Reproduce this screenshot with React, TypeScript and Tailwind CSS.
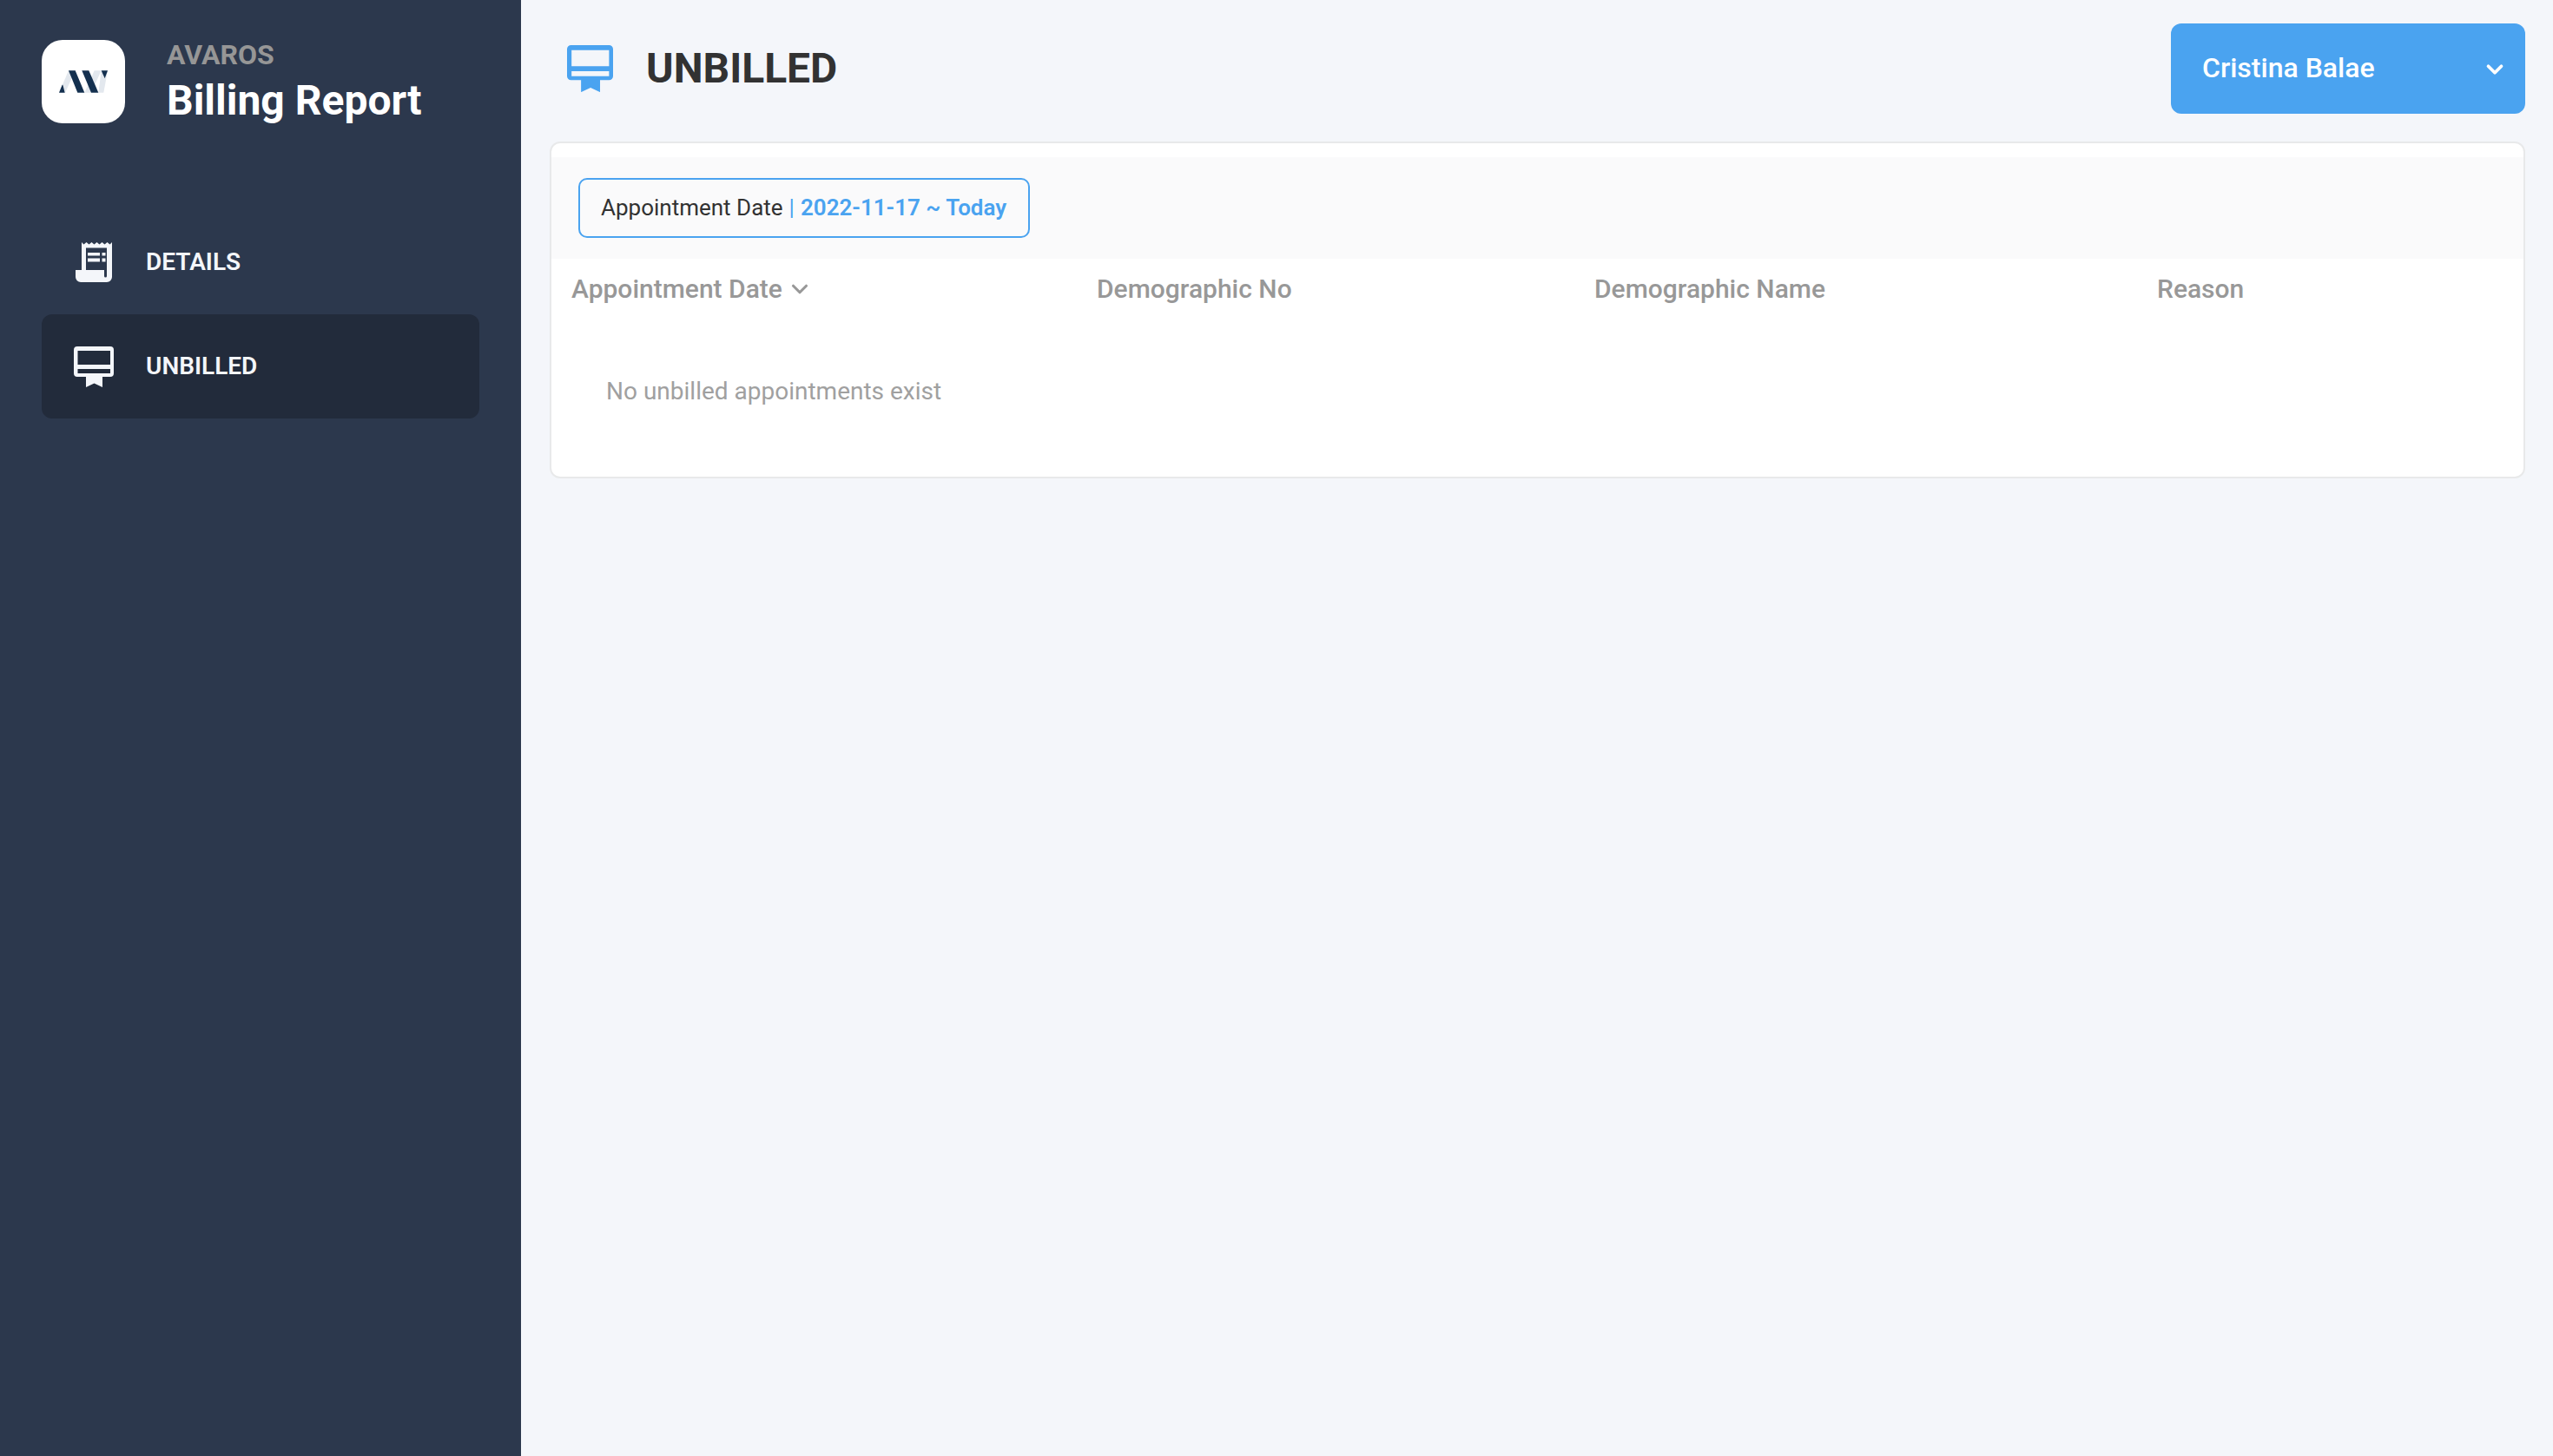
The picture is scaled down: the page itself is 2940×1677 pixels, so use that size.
import { ChevronDown } from 'lucide-react';

const font = { fontFamily: 'Roboto, sans-serif' };

function LogoMark() {
  return (
    <svg width="56" height="26" viewBox="24 63 168 77">
      <polygon points="24,140 45,140 80,63 57,63" fill="#e3e8ee" />
      <polygon points="112,140 135,140 170,63 146,63" fill="#e3e8ee" />
      <polygon points="160,140 178,140 192,63 170,63" fill="#e3e8ee" />
      <polygon points="24,140 44,140 37,113 35,113" fill="#14304f" />
      <polygon points="57,63 80,63 112,140 88,140" fill="#14304f" />
      <polygon points="103,63 127,63 160,140 135,140" fill="#14304f" />
      <polygon points="170,63 192,63 182,90" fill="#14304f" />
    </svg>
  );
}

function ReceiptIcon() {
  return (
    <svg width="42" height="46" viewBox="0 0 42 46" className="text-[#f4f6fa]">
      <path
        fill="currentColor"
        fillRule="evenodd"
        d="M7 0l2.5 2.5L12.500 0l3 2.500L18.500 0l3 2.500L24.500 0l3 2.500L30.500 0l3 2.500L36.500 0l3 2.500L42 0V40a6 6 0 0 1-6 6H6a6 6 0 0 1-6-6V32H7ZM12 6.500V32H33V39a1.500 1.500 0 0 0 3 0V6.500Z"
      />
      <rect x="14" y="12" width="14" height="3.500" fill="currentColor" />
      <rect x="14" y="18.500" width="14" height="4" fill="currentColor" />
      <rect x="30.500" y="12" width="4" height="3.500" fill="currentColor" />
      <rect x="30.500" y="18.500" width="4" height="4" fill="currentColor" />
    </svg>
  );
}

function BillIcon({ size, className }: { size: number; className: string }) {
  return (
    <svg width={size} height={size * 47 / 46} viewBox="0 0 46 47" className={className}>
      <path
        fill="currentColor"
        fillRule="evenodd"
        d="M4 0H42a4 4 0 0 1 4 4V31a4 4 0 0 1-4 4H33V47L23.500 42.500 14 47V35H4a4 4 0 0 1-4-4V4a4 4 0 0 1 4-4ZM4.500 5V21H42V5ZM4.500 26V31H42V26Z"
      />
    </svg>
  );
}

export default function App() {
  return (
    <div className="flex min-h-[1677px] bg-[#f4f6fa]" style={font}>
      {/* 侧边栏 */}
      <aside className="w-[600px] shrink-0 bg-[#2c384d] px-12 pt-[46px]">
        <div className="flex h-24 items-start gap-12">
          <div className="flex h-24 w-24 items-center justify-center rounded-3xl bg-white">
            <LogoMark />
          </div>
          <div>
            <div className="text-[32px] leading-[34px] font-bold text-[#969696]">AVAROS</div>
            <div className="mt-[7px] text-[48px] leading-[58px] font-bold text-white">Billing Report</div>
          </div>
        </div>

        <nav className="mt-[100px] w-[504px]">
          <div className="flex h-[120px] items-center">
            <div className="flex w-[120px] justify-center">
              <ReceiptIcon />
            </div>
            <span className="text-[28px] font-semibold text-[#f4f6fa]">DETAILS</span>
          </div>
          <div className="flex h-[120px] items-center rounded-xl bg-[#222b3b]">
            <div className="flex w-[120px] justify-center">
              <BillIcon size={46} className="text-[#f4f6fa]" />
            </div>
            <span className="text-[28px] font-semibold text-[#f4f6fa]">UNBILLED</span>
          </div>
        </nav>
      </aside>

      {/* 主内容 */}
      <main className="flex-1 pr-8 pl-[33px]">
        <header className="flex h-[163px] items-start justify-between">
          <div className="flex items-center gap-[38px] pt-[52px] pl-5">
            <BillIcon size={53} className="text-[#4aa3f0]" />
            <h1 className="text-[48px] leading-[54px] font-bold text-[#323232]">UNBILLED</h1>
          </div>
          <button className="mt-[27px] flex h-[104px] w-[408px] items-center justify-between rounded-xl bg-[#4aa3f0] pr-5 pl-9 text-[32px] text-white">
            <span className="-mt-[3px] font-medium">Cristina Balae</span>
            <ChevronDown size={30} strokeWidth={3} className="mt-0.5" />
          </button>
        </header>

        <section className="h-[388px] rounded-xl border-2 border-[#e8e9ea] bg-white pt-4">
          <div className="h-[117px] bg-[#fafafb] pt-6 pl-[31px]">
            <div className="flex h-[69px] w-[520px] items-center rounded-[10px] border-2 border-[#4aa3f0] pl-[24px] text-[26px] text-[#323232]">
              <span>Appointment Date</span>
              <span className="ml-[7px] text-[#4aa3f0]">|</span>
              <span className="ml-[7px] font-semibold text-[#4aa3f0]">2022-11-17 ~ Today</span>
            </div>
          </div>

          <div className="-mt-[2px] grid h-[72px] grid-cols-[605px_573px_648px_1fr] items-center pl-[23px] text-[30px] font-medium text-[#989898]">
            <div className="flex items-center gap-[5px]">
              Appointment Date
              <ChevronDown size={30} strokeWidth={2.500} className="mt-0.5" />
            </div>
            <div>Demographic No</div>
            <div>Demographic Name</div>
            <div>Reason</div>
          </div>

          <p className="mt-[62px] pl-[63px] text-[28px] text-[#a0a0a0]">No unbilled appointments exist</p>
        </section>
      </main>
    </div>
  );
}
